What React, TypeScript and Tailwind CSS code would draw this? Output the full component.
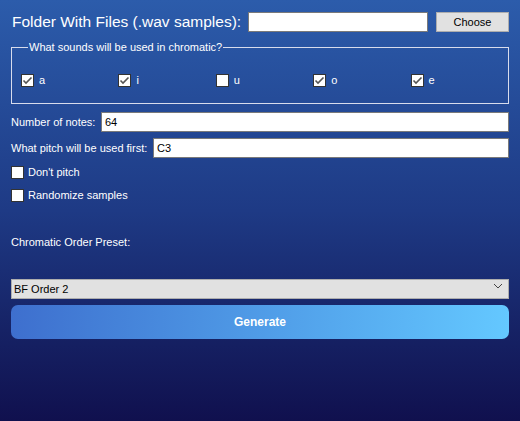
import { useState } from "react";

const font = { fontFamily: '"Liberation Sans", Arial, sans-serif' };

const Check = ({ checked, onClick }: { checked: boolean; onClick: () => void }) => {
  return (
    <span
      onClick={onClick}
      className="flex h-[13px] w-[13px] shrink-0 cursor-pointer items-center justify-center border border-[#333333] bg-white"
    >
      {checked && (
        <svg width="11" height="11" viewBox="0 0 11 11">
          <path d="M1.5 5.5 L4 8 L9.5 2.5" fill="none" stroke="#555555" strokeWidth="1.6" />
        </svg>
      )}
    </span>
  );
};

const SoundBox = ({ label, checked, onClick }: { label: string; checked: boolean; onClick: () => void }) => {
  return (
    <label className="flex items-center gap-[5px] text-[11px] text-white">
      <Check checked={checked} onClick={onClick} />
      <span>{label}</span>
    </label>
  );
};

const App = () => {
  const [sounds, setSounds] = useState<Record<string, boolean>>({ a: true, i: true, u: false, o: true, e: true });
  const [dontPitch, setDontPitch] = useState<boolean>(false);
  const [randomize, setRandomize] = useState<boolean>(false);

  return (
    <div
      style={font}
      className="flex h-[421px] w-[520px] flex-col bg-gradient-to-b from-[#2c5cab] via-[#1e3a85] to-[#10104e] px-[11px] pt-[12px] text-white"
    >
      {/* Folder row */}
      <div className="flex h-[20px] items-center">
        <span className="whitespace-nowrap pl-px text-[15.5px] leading-none">Folder With Files (.wav samples):</span>
        <input className="ml-auto h-[20px] w-[180px] border border-[#7a7a7a] bg-white px-1 text-[11px] text-black outline-none" />
        <button className="ml-[8px] h-[20px] w-[73px] border border-[#adadad] bg-[#e1e1e1] text-[11px] text-black">
          Choose
        </button>
      </div>

      {/* Sounds */}
      <fieldset className="mt-[8px] h-[64px] border border-[#d8dcec] pl-[9px]">
        <legend className="ml-[7px] whitespace-nowrap px-px text-[11px] leading-[14px]">What sounds will be used in chromatic?</legend>
        <div className="mt-[18px] grid grid-cols-5">
          {["a", "i", "u", "o", "e"].map((s) => (
            <SoundBox key={s} label={s} checked={sounds[s]} onClick={() => setSounds({ ...sounds, [s]: !sounds[s] })} />
          ))}
        </div>
      </fieldset>

      {/* Number inputs */}
      <div className="mt-[8px] flex items-center text-[11px]">
        <span className="w-[90px] shrink-0 whitespace-nowrap">Number of notes:</span>
        <input defaultValue="64" className="h-[20px] min-w-0 flex-1 border border-[#7a7a7a] bg-white px-[3px] text-black outline-none" />
      </div>
      <div className="mt-[6px] flex items-center text-[11px]">
        <span className="w-[142px] shrink-0 whitespace-nowrap">What pitch will be used first:</span>
        <input defaultValue="C3" className="h-[20px] min-w-0 flex-1 border border-[#7a7a7a] bg-white px-[3px] text-black outline-none" />
      </div>

      <label className="mt-[8px] flex h-[13px] items-center gap-[4px] text-[11px]">
        <Check checked={dontPitch} onClick={() => setDontPitch(!dontPitch)} />
        <span>Don't pitch</span>
      </label>
      <label className="mt-[10px] flex h-[13px] items-center gap-[4px] text-[11px]">
        <Check checked={randomize} onClick={() => setRandomize(!randomize)} />
        <span>Randomize samples</span>
      </label>

      <div className="mt-[33px] text-[11px] leading-[14px]">Chromatic Order Preset:</div>

      <div className="relative mt-[27px] h-[20px]">
        <select className="h-[20px] w-full appearance-none border border-[#adadad] bg-[#e1e1e1] px-[2px] text-[11px] text-black outline-none">
          <option>BF Order 2</option>
          <option>BF Order 1</option>
        </select>
        <svg className="pointer-events-none absolute right-[6px] top-[7px]" width="10" height="6" viewBox="0 0 10 6">
          <path d="M1 1 L5 5 L9 1" fill="none" stroke="#444444" strokeWidth="1" />
        </svg>
      </div>

      <button className="mt-[9px] h-[34px] w-full rounded-[7px] bg-gradient-to-r from-[#3e6fce] to-[#64c8ff] text-[12px] font-bold text-white">
        Generate
      </button>
    </div>
  );
};

export default App;
